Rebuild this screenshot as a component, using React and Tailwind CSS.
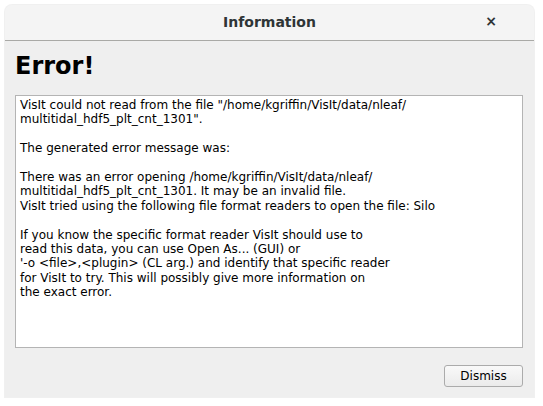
import React from 'react';

const lines = [
  'VisIt could not read from the file "/home/kgriffin/VisIt/data/nleaf/',
  'multitidal_hdf5_plt_cnt_1301".',
  '',
  'The generated error message was:',
  '',
  'There was an error opening /home/kgriffin/VisIt/data/nleaf/',
  'multitidal_hdf5_plt_cnt_1301. It may be an invalid file.',
  'VisIt tried using the following file format readers to open the file: Silo',
  '',
  'If you know the specific format reader VisIt should use to',
  'read this data, you can use Open As... (GUI) or',
  "'-o <file>,<plugin> (CL arg.) and identify that specific reader",
  'for VisIt to try. This will possibly give more information on',
  'the exact error.',
];

export default function App() {
  return (
    <div className="w-[543px] h-[406px] bg-white pt-[5px] pl-[5px]" style={{ fontFamily: '"DejaVu Sans", sans-serif' }}>
      <div className="w-[529px] h-[392px] flex flex-col bg-[#efefef] rounded-t-[7px] overflow-hidden shadow-[0_0_0_1px_rgba(0,0,0,0.06)]">
        {/* title bar */}
        <div className="h-[36px] shrink-0 bg-[#f4f4f4] border-b border-[#a9a9a6] flex items-center justify-center relative">
          <span className="text-[14px] font-bold text-[#2e3436]">Information</span>
          <span className="absolute right-[37px] top-[9px] text-[14px] font-bold text-[#2e3436] leading-none">×</span>
        </div>

        {/* body */}
        <div className="flex-1 flex flex-col pt-[11px] pl-[10px] pr-[11px] pb-[10px]">
          <h1 className="text-[24px] leading-[28px] font-bold text-black">Error!</h1>
          <div className="mt-[15px] flex-1 bg-white border border-[#b4b4b4] pl-[4px] pt-[2px]">
            {lines.map((l, i) => (
              <div key={i} className="text-[12px] leading-[14.4px] text-black h-[14.4px] whitespace-pre">{l}</div>
            ))}
          </div>
          <div className="mt-[17px] flex justify-end">
            <button className="w-[79px] h-[22px] rounded-[3px] border border-[#ababab] bg-gradient-to-b from-[#f9f9f9] to-[#ebebeb] text-[12px] text-black">
              Dismiss
            </button>
          </div>
        </div>
      </div>
    </div>
  );
}
